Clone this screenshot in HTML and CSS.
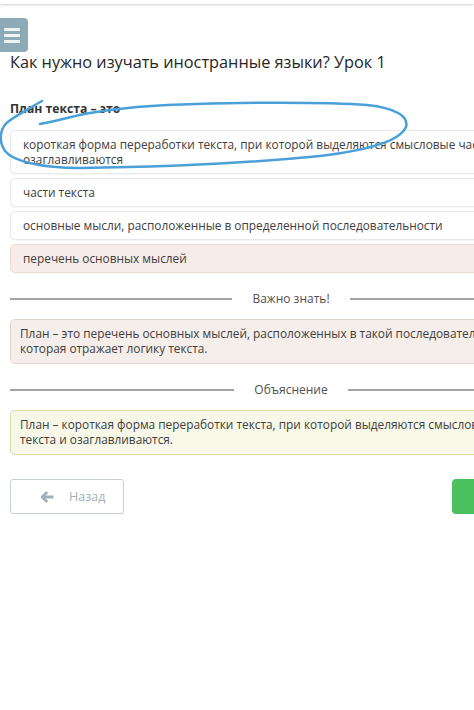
FILE: index.html
```html
<!DOCTYPE html>
<html lang="ru">
<head>
<meta charset="utf-8">
<title>Урок 1</title>
<link rel="stylesheet" href="styles.css">
</head>
<body>
<div class="topbar"></div>
<button class="menu-btn" aria-label="Меню">
  <span></span><span></span><span></span>
</button>
<main class="page">
  <h1 class="title">Как нужно изучать иностранные языки? Урок 1</h1>
  <p class="question">План текста – это</p>
  <div class="options">
    <div class="option">короткая форма переработки текста, при которой выделяются смысловые части текста и<br>озаглавливаются</div>
    <div class="option">части текста</div>
    <div class="option">основные мысли, расположенные в определенной последовательности</div>
    <div class="option option-wrong">перечень основных мыслей</div>
  </div>
  <div class="divider"><span>Важно знать!</span></div>
  <div class="note note-pink">План – это перечень основных мыслей, расположенных в такой последовательности,<br>которая отражает логику текста.</div>
  <div class="divider"><span>Объяснение</span></div>
  <div class="note note-green">План – короткая форма переработки текста, при которой выделяются смысловые части<br>текста и озаглавливаются.</div>
  <div class="nav">
    <button class="btn-back">
      <svg width="13" height="12" viewBox="0 0 13 12"><path d="M6.2 1 L1.2 6 L6.2 11 M1.5 6 H12.5" fill="none" stroke="#9fb0b6" stroke-width="2.8" stroke-linejoin="round"/></svg>
      <span>Назад</span>
    </button>
    <button class="btn-next"></button>
  </div>
</main>
<svg class="scribble" width="474" height="200" viewBox="0 0 474 200">
  <path d="M42 101 C32 107 20 113 9 121 C0 127 -2 141 5 151 C13 161 40 168 80 168 C160 167 250 163 320 156 C370 150 400 141 406 127 C409 116 395 108 367 105 C330 102 240 102 167 105 C130 107 90 112 67 118 C55 121 46 123 40 124" fill="none" stroke="#4aa0d8" stroke-width="2.5" stroke-linecap="round"/>
</svg>
</body>
</html>
```
FILE: styles.css
```css
html, body {
  margin: 0;
  padding: 0;
  background: #ffffff;
  overflow: hidden;
}
body {
  position: relative;
  width: 474px;
  height: 710px;
  font-family: "Open Sans", "Noto Sans", sans-serif;
  color: #444;
}
.topbar {
  height: 4px;
  background: #fff;
  box-shadow: 0 1px 3px rgba(0, 0, 0, 0.18);
}
.menu-btn {
  display: flex;
  flex-direction: column;
  justify-content: center;
  gap: 3px;
  margin: 14px 0 0 0;
  width: 28px;
  height: 34px;
  padding: 0 0 0 4px;
  border: none;
  border-radius: 0 4px 4px 0;
  background: #8eaab7;
}
.menu-btn span {
  display: block;
  width: 16px;
  height: 3px;
  background: #eef3f5;
  border-radius: 1px;
}
.page {
  width: 562px;
  padding: 0 0 0 10px;
}
.title {
  margin: 0;
  font-size: 16.3px;
  font-weight: 400;
  line-height: 20px;
  color: #262626;
}
.question {
  margin: 28px 0 0;
  font-size: 12.2px;
  font-weight: 700;
  line-height: 18px;
  color: #333;
}
.options {
  display: flex;
  flex-direction: column;
  gap: 4px;
  margin-top: 12px;
}
.option {
  border: 1px solid #e7e9e9;
  border-radius: 5px;
  background: #fff;
  padding: 6px 12px;
  font-size: 11.85px;
  line-height: 15px;
  color: #404040;
  white-space: nowrap;
  box-shadow: 0 1px 1px rgba(0, 0, 0, 0.03);
}
.option-wrong {
  background: #f7ece8;
  border-color: #ebdcd7;
}
.divider {
  display: flex;
  align-items: center;
  gap: 20px;
  margin: 18px 0 12px;
  font-size: 12px;
  line-height: 16px;
  color: #505050;
}
.divider::before,
.divider::after {
  content: "";
  flex: 1;
  height: 1.5px;
  background: #a3a3a3;
}
.note {
  border-radius: 5px;
  padding: 6px 9px 7px;
  font-size: 11.85px;
  line-height: 15px;
  color: #404040;
  white-space: nowrap;
}
.note-pink {
  background: #f6eeea;
  border: 1px solid #e2d3cc;
}
.note-green {
  background: #f7f8e7;
  border: 1px solid #d7dfa6;
}
.nav {
  display: flex;
  justify-content: space-between;
  margin-top: 24px;
}
.btn-back {
  display: flex;
  align-items: center;
  gap: 15px;
  width: 114px;
  height: 35px;
  padding: 0 0 0 30px;
  border: 1px solid #c7d1d4;
  border-radius: 3px;
  background: #fff;
  font-family: inherit;
  font-size: 12.5px;
  color: #9fb0b6;
}
.btn-next {
  width: 120px;
  height: 35px;
  border: none;
  border-radius: 4px;
  background: #4cbf5e;
}
.scribble {
  position: absolute;
  left: 0;
  top: 0;
  pointer-events: none;
}
```
